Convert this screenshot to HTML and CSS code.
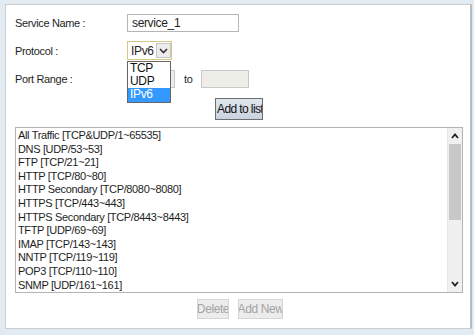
FILE: index.html
```html
<!DOCTYPE html>
<html>
<head>
<meta charset="utf-8">
<link rel="stylesheet" href="styles.css">
</head>
<body>
<div class="panel">
  <div class="row r1">
    <div class="label">Service Name :</div>
    <div class="input name">service_1</div>
  </div>
  <div class="row r2">
    <div class="label">Protocol :</div>
    <div class="select-wrap">
      <div class="select">
        <span class="sel-text">IPv6</span>
        <span class="sel-btn"><svg width="9" height="6" viewBox="0 0 9 6"><path d="M1 1 L4.5 4.5 L8 1" fill="none" stroke="#333" stroke-width="1.6"/></svg></span>
      </div>
      <div class="dropdown">
        <div class="opt">TCP</div>
        <div class="opt">UDP</div>
        <div class="opt on">IPv6</div>
      </div>
    </div>
  </div>
  <div class="row r3">
    <div class="label">Port Range :</div>
    <div class="input port"></div>
    <div class="to">to</div>
    <div class="input port dis"></div>
  </div>
  <div class="row r4">
    <div class="btn add">Add to list</div>
  </div>
  <div class="listbox">
    <div class="items">
      <div>All Traffic [TCP&amp;UDP/1~65535]</div>
      <div>DNS [UDP/53~53]</div>
      <div>FTP [TCP/21~21]</div>
      <div>HTTP [TCP/80~80]</div>
      <div>HTTP Secondary [TCP/8080~8080]</div>
      <div>HTTPS [TCP/443~443]</div>
      <div>HTTPS Secondary [TCP/8443~8443]</div>
      <div>TFTP [UDP/69~69]</div>
      <div>IMAP [TCP/143~143]</div>
      <div>NNTP [TCP/119~119]</div>
      <div>POP3 [TCP/110~110]</div>
      <div>SNMP [UDP/161~161]</div>
    </div>
    <div class="scroll">
      <div class="arrow"><svg width="8" height="6" viewBox="0 0 8 6"><path d="M1 5 L4 1.5 L7 5" fill="none" stroke="#222" stroke-width="1.8"/></svg></div>
      <div class="thumb"></div>
      <div class="track"></div>
      <div class="arrow"><svg width="8" height="6" viewBox="0 0 8 6"><path d="M1 1 L4 4.5 L7 1" fill="none" stroke="#222" stroke-width="1.8"/></svg></div>
    </div>
  </div>
  <div class="row r5">
    <div class="btn off del">Delete</div>
    <div class="btn off new">Add New</div>
  </div>
</div>
</body>
</html>
```
FILE: styles.css
```css
html, body {
  margin: 0;
  padding: 0;
}
body {
  background: #e3ebf2;
  font-family: "Liberation Sans", Arial, sans-serif;
  font-size: 11px;
  letter-spacing: -0.35px;
  color: #1e1e1e;
  width: 474px;
  height: 335px;
  overflow: hidden;
}
.panel {
  box-sizing: border-box;
  margin: 4px 0 0 5px;
  width: 467px;
  height: 325px;
  background: #fff;
  border: 1px solid #c9ced2;
  border-right: 2px solid #b7bcc0;
  padding: 9px 0 0 9px;
  display: flex;
  flex-direction: column;
}
.row {
  display: flex;
  align-items: center;
}
.label {
  width: 112px;
}
.input {
  box-sizing: border-box;
  border: 1px solid #b5b5b5;
  background: #fff;
  height: 18px;
  line-height: 16px;
  padding-left: 4px;
  font-size: 12px;
}
.name {
  width: 112px;
}
.r2 {
  margin-top: 9px;
}
.select-wrap {
  position: relative;
}
.select {
  box-sizing: border-box;
  width: 45px;
  height: 19px;
  border: 1px solid #d8c58a;
  display: flex;
  align-items: center;
  font-size: 12px;
  background: #fff;
}
.sel-text {
  padding-left: 3px;
  width: 25px;
}
.sel-btn {
  box-sizing: border-box;
  width: 15px;
  height: 15px;
  border: 1px solid #c5c5c5;
  background: #ececec;
  display: flex;
  align-items: center;
  justify-content: center;
}
.dropdown {
  position: absolute;
  left: 0;
  top: 20px;
  width: 44px;
  box-sizing: border-box;
  border: 1px solid #666;
  background: #fff;
  font-size: 12px;
  z-index: 2;
}
.opt {
  height: 13px;
  line-height: 13px;
  padding-left: 2px;
  color: #111;
}
.opt.on {
  background: #3399ff;
  color: #fff;
  height: 14px;
}
.r3 {
  margin-top: 10px;
}
.port {
  width: 48px;
  background: #eeeee8;
  border-color: #c8c8c8;
}
.to {
  width: 26px;
  padding-left: 9px;
  box-sizing: border-box;
}
.r4 {
  margin-top: 10px;
  padding-left: 200px;
}
.btn {
  box-sizing: border-box;
  height: 22px;
  display: flex;
  align-items: center;
  justify-content: center;
  font-size: 12px;
  white-space: nowrap;
  overflow: hidden;
}
.add {
  width: 48px;
  background: linear-gradient(#dfe6ee, #c9d3de);
  border: 1px solid #6b6f73;
  color: #111;
  letter-spacing: -0.6px;
  justify-content: flex-start;
  padding-left: 1px;
}
.listbox {
  box-sizing: border-box;
  margin-top: 7px;
  width: 448px;
  height: 166px;
  border: 1px solid #b4b4b4;
  display: flex;
  background: #fff;
}
.items {
  flex: 1;
  padding: 1px 0 0 2px;
}
.items div {
  height: 13.6px;
  line-height: 13.6px;
  white-space: nowrap;
}
.scroll {
  width: 14px;
  display: flex;
  flex-direction: column;
  background: #f0f0f0;
  border-left: 1px solid #e6e6e6;
}
.arrow {
  height: 16px;
  flex: none;
  display: flex;
  align-items: center;
  justify-content: center;
}
.thumb {
  height: 76px;
  flex: none;
  background: #c8c8c8;
  margin: 0 1px;
}
.track {
  flex: 1;
}
.r5 {
  margin-top: 6px;
  padding-left: 182px;
  gap: 9px;
}
.off {
  height: 20px;
  border: 1px solid #d5d5d5;
  background: #ececec;
  color: #a3a3a3;
  letter-spacing: -0.4px;
}
.del {
  width: 32px;
}
.new {
  width: 45px;
}
```
